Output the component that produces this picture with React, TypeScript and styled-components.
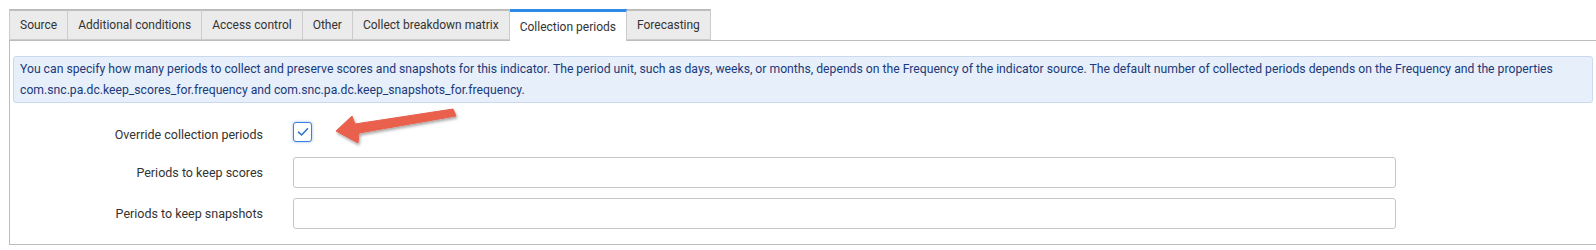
import styled, { createGlobalStyle } from "styled-components";

const GlobalStyle = createGlobalStyle`
  body {
    margin: 0;
    background: #ffffff;
    font-family: Roboto, "Liberation Sans", Arial, sans-serif;
    color: #333333;
  }
`;

const tabs = [
  "Source",
  "Additional conditions",
  "Access control",
  "Other",
  "Collect breakdown matrix",
  "Collection periods",
  "Forecasting",
];
const activeTab = "Collection periods";

export default function App() {
  return (
    <>
      <GlobalStyle />
      <Page>
        <TabBar>
          {tabs.map((t) => (
            <Tab key={t} $active={t === activeTab}>
              {t}
            </Tab>
          ))}
        </TabBar>
        <Panel>
          <InfoBox>
            You can specify how many periods to collect and preserve scores and
            snapshots for this indicator. The period unit, such as days, weeks,
            or months, depends on the Frequency of the indicator source. The
            default number of collected periods depends on the Frequency and the
            properties com.snc.pa.dc.keep_scores_for.frequency and
            com.snc.pa.dc.keep_snapshots_for.frequency.
          </InfoBox>
          <Form>
            <Label>Override collection periods</Label>
            <CheckCell>
              <Checkbox>
                <svg width="12" height="10" viewBox="0 0 12 10">
                  <path
                    d="M1.5 5.2 L4.6 8 L10.5 1.8"
                    fill="none"
                    stroke="#2f74d0"
                    strokeWidth="1.6"
                    strokeLinecap="round"
                    strokeLinejoin="round"
                  />
                </svg>
              </Checkbox>
              {/* annotation arrow pointing at the checkbox */}
              <Arrow width="130" height="40" viewBox="0 0 130 40">
                <defs>
                  <filter id="sh" x="-20%" y="-40%" width="140%" height="180%">
                    <feDropShadow dx="1" dy="2" stdDeviation="1.5" floodColor="#000" floodOpacity="0.35" />
                  </filter>
                </defs>
                <path
                  d="M3 19 L19 4 L22 12 L120 -3 L123 4 L26 21 L25 31 Z"
                  fill="#e9604e"
                  stroke="#e9604e"
                  strokeWidth="1"
                  strokeLinejoin="round"
                  filter="url(#sh)"
                />
              </Arrow>
            </CheckCell>
            <Label>Periods to keep scores</Label>
            <TextInput />
            <Label>Periods to keep snapshots</Label>
            <TextInput />
          </Form>
        </Panel>
      </Page>
    </>
  );
}

const Page = styled.div`
  padding: 9px 0 0 9px;
  box-sizing: border-box;
  width: 1596px;
`;

const TabBar = styled.div`
  display: flex;
  align-items: flex-end;
  height: 31px;
  position: relative;
  z-index: 1;
`;

const Tab = styled.div<{ $active?: boolean }>`
  box-sizing: border-box;
  height: ${(p) => (p.$active ? "32px" : "31px")};
  margin-bottom: ${(p) => (p.$active ? "-1px" : "0")};
  display: flex;
  align-items: center;
  padding: 0 10px;
  font-size: 12px;
  color: #333333;
  background: ${(p) => (p.$active ? "#ffffff" : "#ebebeb")};
  border: 1px solid #cccccc;
  border-top: ${(p) => (p.$active ? "3px solid #2d8ae6" : "2px solid #bdbdbd")};
  border-bottom: ${(p) => (p.$active ? "none" : "1px solid #cccccc")};
  & + & {
    border-left: none;
  }
  white-space: nowrap;
`;

const Panel = styled.div`
  border-top: 1px solid #bcbcbc;
  border-left: 1px solid #bcbcbc;
  border-bottom: 1px solid #bcbcbc;
  padding: 15px 3px 18px 3px;
  height: 205px;
  box-sizing: border-box;
`;

const InfoBox = styled.div`
  background: #e7effa;
  border: 1px solid #cad9ee;
  border-radius: 3px;
  color: #1a3a7a;
  font-size: 12.2px;
  line-height: 21px;
  padding: 2px 6px 1px 6px;
`;

const Form = styled.div`
  display: grid;
  grid-template-columns: 250px 1103px;
  column-gap: 30px;
  row-gap: 10px;
  align-items: center;
  margin-top: 19px;
`;

const Label = styled.div`
  text-align: right;
  font-size: 12.5px;
  color: #333333;
`;

const CheckCell = styled.div`
  position: relative;
  height: 20px;
  margin-bottom: 5px;
  display: flex;
  align-items: center;
`;

const Checkbox = styled.div`
  box-sizing: border-box;
  width: 19px;
  height: 20px;
  border: 1.5px solid #3d80d8;
  border-radius: 3px;
  box-shadow: 0 0 3px rgba(61, 128, 216, 0.55);
  display: flex;
  align-items: center;
  justify-content: center;
  background: #fff;
`;

const Arrow = styled.svg`
  position: absolute;
  left: 40px;
  top: -10px;
  overflow: visible;
`;

const TextInput = styled.input`
  box-sizing: border-box;
  height: 31px;
  width: 100%;
  border: 1px solid #c6c6c6;
  border-radius: 3px;
  background: #fff;
  outline: none;
`;
